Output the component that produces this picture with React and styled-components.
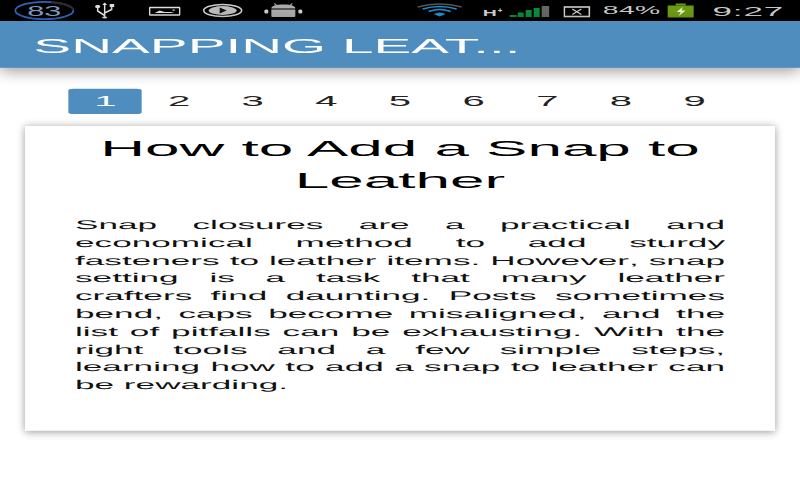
import styled, { createGlobalStyle } from 'styled-components';

// the screen is a 480x800 phone portrait squeezed into 800x480
const SX = 800 / 480;
const SY = 480 / 800;

const GlobalStyle = createGlobalStyle`
html, body {
  margin: 0;
  padding: 0;
  width: 800px;
  height: 480px;
  overflow: hidden;
  background: #fff;
}
`;

const Frame = styled.div`
width: 800px;
height: 480px;
overflow: hidden;
`;

const Stage = styled.div`
width: 480px;
height: 800px;
transform: scale(${SX}, ${SY});
transform-origin: 0 0;
background: #fff;
font-family: "Liberation Sans", Arial, sans-serif;
color: #111;
filter: blur(0.3px);
`;

const StatusBar = styled.div`
height: 35px;
background: #000;
display: flex;
align-items: flex-start;
justify-content: space-between;
`;

const StatusGroup = styled.div`
display: flex;
align-items: flex-start;
`;

const StatusText = styled.span`
font-size: ${(p) => p.$size}px;
line-height: 37px;
height: 35px;
color: #c8c8c8;
margin-left: ${(p) => p.$left / SX}px;
letter-spacing: ${(p) => p.$spacing}px;
`;

const Svg = styled.svg`
display: block;
flex: none;
margin-left: ${(p) => p.$left / SX}px;
`;

// drawn in screenshot pixels, stretched back by the stage
const Icon = ({ w, left = 0, children }) => (
  <Svg
    $left={left}
    width={w / SX}
    height={21 / SY}
    viewBox={`0 0 ${w} 21`}
    preserveAspectRatio="none"
  >
    {children}
  </Svg>
);

const Header = styled.header`
height: 78px;
background: #4f8dbf;
box-shadow: 0 6px 14px rgba(0, 0, 0, 0.4);
display: flex;
align-items: center;
padding-left: 20px;
padding-top: 4px;
box-sizing: border-box;
color: #fff;
font-size: 34px;
position: relative;
`;

const Pager = styled.nav`
display: flex;
justify-content: center;
padding-top: 35px;
height: 97px;
box-sizing: border-box;
`;

const Page = styled.span`
width: 44.2px;
height: 42px;
line-height: 39px;
text-align: center;
font-size: 24px;
border-radius: 3px;
color: ${(p) => (p.$active ? '#fff' : '#222')};
background: ${(p) => (p.$active ? '#4f8dbf' : 'transparent')};
`;

const Card = styled.article`
margin: 0 15px;
height: 508px;
box-sizing: border-box;
background: #fff;
box-shadow: 0 2px 8px rgba(0, 0, 0, 0.4);
padding: 0 30px;
`;

const Title = styled.h1`
margin: 0;
padding-top: 11px;
font-size: 37.2px;
font-weight: 400;
line-height: 53px;
text-align: center;
color: #000;
`;

const Body = styled.p`
margin: 33px 0 0;
font-size: 21.1px;
font-kerning: none;
text-rendering: geometricPrecision;
line-height: 29.8px;
text-align: justify;
color: #111;
`;

const pages = [1, 2, 3, 4, 5, 6, 7, 8, 9];

export default function App() {
  return (
    <Frame>
      <GlobalStyle />
      <Stage>
        <StatusBar>
          <StatusGroup>
            <Icon w={64} left={14}>
              <ellipse cx="31" cy="10.5" rx="29" ry="8.7" fill="none" stroke="#2f62b8" strokeWidth="1.8" />
              <path d="M38 2.3 A29 8.7 0 0 1 60 10" fill="none" stroke="#2a2a2a" strokeWidth="2" />
              <text x="31" y="16" textAnchor="middle" fontSize="15" textLength="34" lengthAdjust="spacingAndGlyphs" fill="#7f9cc4" fontFamily="Liberation Sans">83</text>
            </Icon>
            <Icon w={26} left={13}>
              <path d="M13 3V18M13 15.5L6 11V7.5M13 13L20 9.5V6.5" fill="none" stroke="#ddd" strokeWidth="1.5" />
              <path d="M10.5 5L13 2.5L15.5 5Z" fill="#ddd" />
              <rect x="3.5" y="5" width="5" height="3" rx="1.5" fill="#ddd" />
              <rect x="18" y="4" width="4.5" height="3" fill="#ddd" />
              <ellipse cx="13" cy="17.5" rx="2.5" ry="1" fill="#ddd" />
            </Icon>
            <Icon w={36} left={30}>
              <rect x="3" y="7.5" width="30" height="7.5" rx="0.5" fill="none" stroke="#ddd" strokeWidth="1.4" />
              <path d="M8 13L13 10.5L18 12L24 12L28 13Z" fill="#ddd" />
              <rect x="26" y="9.5" width="2" height="1.2" fill="#ddd" />
            </Icon>
            <Icon w={42} left={19}>
              <ellipse cx="21" cy="10.5" rx="19" ry="6" fill="none" stroke="#ccc" strokeWidth="1.6" />
              <ellipse cx="21" cy="10.5" rx="14" ry="4.4" fill="#bbb" />
              <path d="M18 7.5L25 10.5L18 13.5Z" fill="#111" />
            </Icon>
            <Icon w={40} left={20}>
              <path d="M8 9.5H32V16A1 1 0 0 1 31 17H9A1 1 0 0 1 8 16Z" fill="#aaa" />
              <path d="M8 8.5C8 6 12 4.5 20 4.5C28 4.5 32 6 32 8.5Z" fill="#aaa" />
              <path d="M13 5L11 3.5M27 5L29 3.5" stroke="#aaa" strokeWidth="1" />
              <rect x="1" y="9.5" width="4" height="4" rx="1.5" fill="#ccc" />
              <rect x="35" y="9.5" width="4" height="4" rx="1.5" fill="#ccc" />
            </Icon>
          </StatusGroup>
          <StatusGroup>
            <Icon w={48}>
              <path d="M1 7Q23 1 45 7" fill="none" stroke="#555" strokeWidth="1.5" />
              <path d="M6 9Q23 4 40 9" fill="none" stroke="#1d8fd6" strokeWidth="1.6" />
              <path d="M12 11.5Q23 7.5 34 11.5" fill="none" stroke="#1d8fd6" strokeWidth="1.6" />
              <path d="M17 14Q23 11 29 14L23 16.5Z" fill="#1d8fd6" />
            </Icon>
            <Icon w={70} left={17}>
              <text x="1" y="16" fontSize="9" textLength="14" lengthAdjust="spacingAndGlyphs" fontWeight="700" fill="#ccc" fontFamily="Liberation Sans">H</text>
              <text x="16" y="12.5" fontSize="8" fontWeight="700" fill="#ccc" fontFamily="Liberation Sans">+</text>
              <rect x="28" y="15" width="7" height="2" fill="#0b8a3c" />
              <rect x="36" y="12.5" width="6" height="4.5" fill="#0b8a3c" />
              <rect x="44" y="10" width="6" height="7" fill="#0b8a3c" />
              <rect x="52" y="8" width="6" height="9" fill="#0b8a3c" />
              <rect x="60" y="6" width="7.5" height="11" fill="#666" />
            </Icon>
            <Icon w={28} left={12}>
              <rect x="1" y="7" width="25" height="9.5" fill="none" stroke="#ccc" strokeWidth="1.6" />
              <path d="M9 9L18 14.5M18 9L9 14.5" stroke="#ccc" strokeWidth="1.3" />
            </Icon>
            <StatusText $size={17} $spacing={0.2} $left={12}>84%</StatusText>
            <Icon w={28} left={6}>
              <rect x="1" y="5.5" width="26" height="12" fill="#6a9a14" />
              <rect x="9" y="3.5" width="10" height="2" fill="#6a9a14" />
              <path d="M16 7L10 12H14L12 16L19 10.5H15Z" fill="#e8f0c8" />
            </Icon>
            <StatusText $size={21} $spacing={0.5} $left={18}>9:27</StatusText>
            <Icon w={16} />
          </StatusGroup>
        </StatusBar>
        <Header>SNAPPING LEAT...</Header>
        <Pager>
          {pages.map((n) => (
            <Page key={n} $active={n === 1}>{n}</Page>
          ))}
        </Pager>
        <Card>
          <Title>How to Add a Snap to Leather</Title>
          <Body>
            Snap closures are a practical and economical method to add sturdy fasteners to leather
            items. However, snap setting is a task that many leather crafters find daunting. Posts
            sometimes bend, caps become misaligned, and the list of pitfalls can be exhausting. With
            the right tools and a few simple steps, learning how to add a snap to leather can be
            rewarding.
          </Body>
        </Card>
      </Stage>
    </Frame>
  );
}
